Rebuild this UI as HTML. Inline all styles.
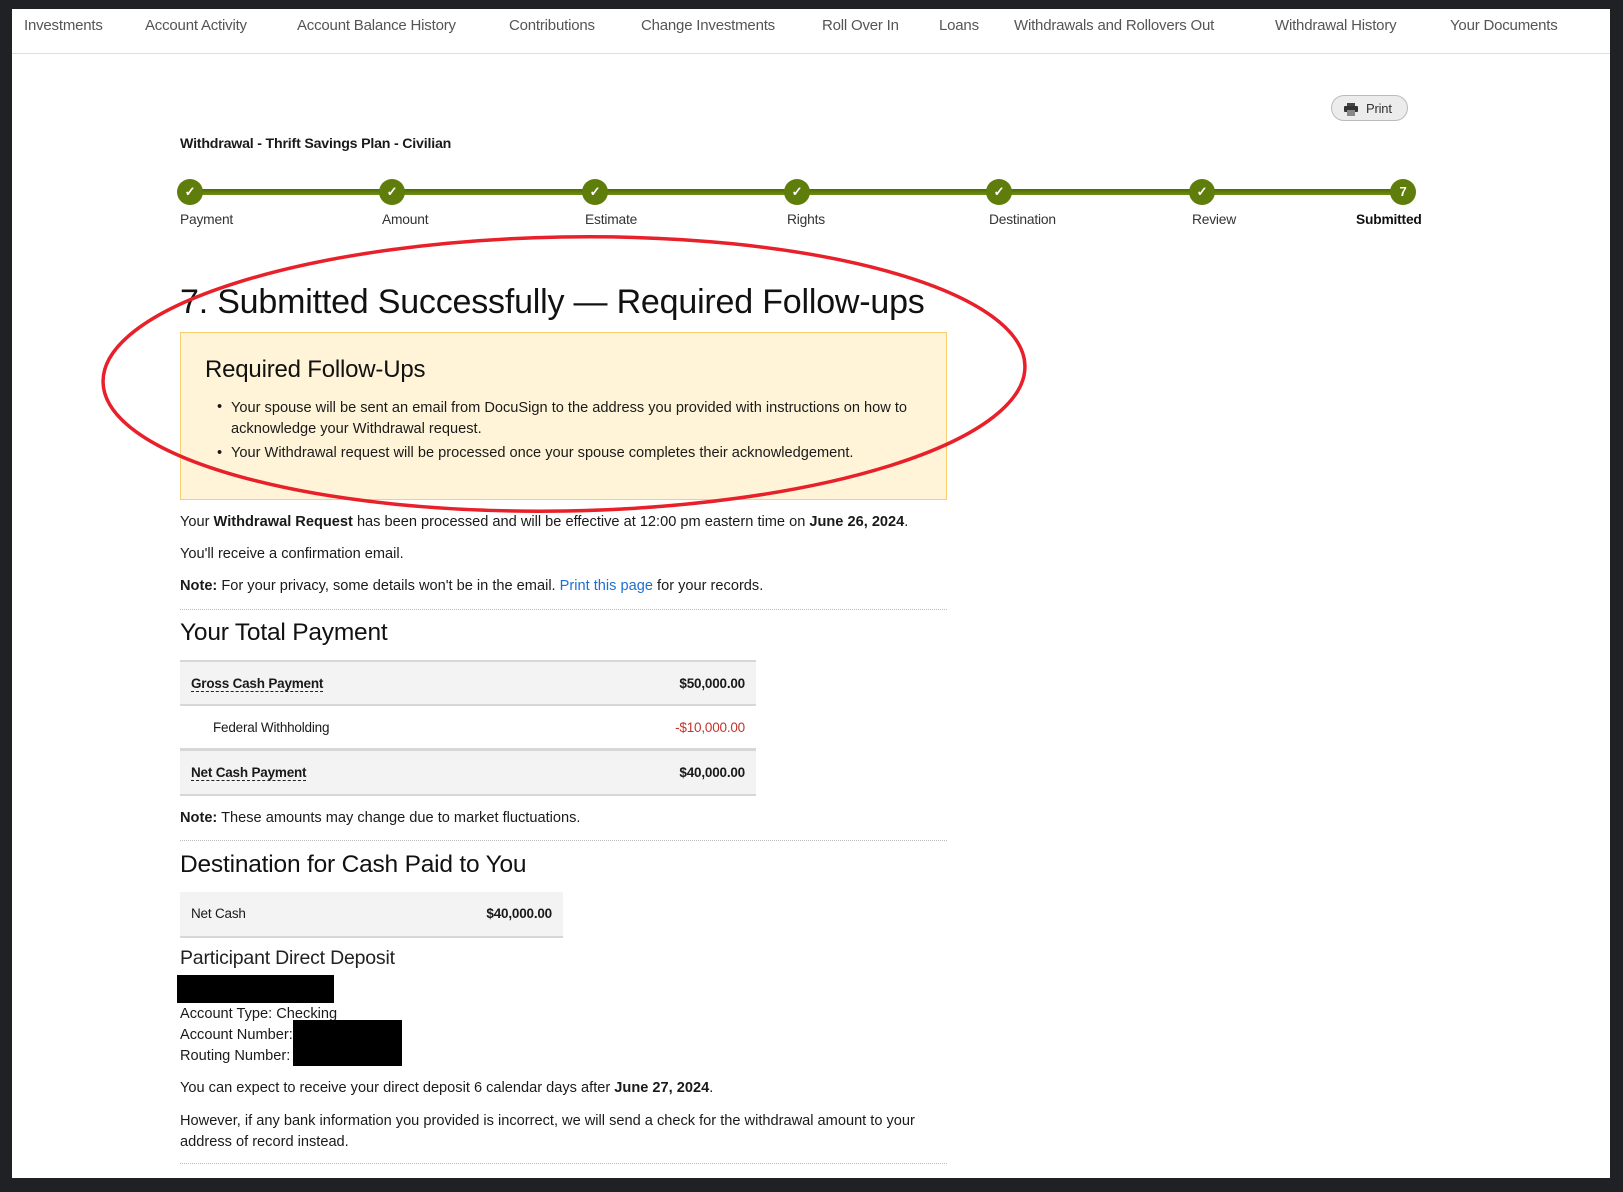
<!DOCTYPE html>
<html><head><meta charset="utf-8"><style>
*{margin:0;padding:0;box-sizing:border-box}
body{width:1623px;height:1192px;background:#202124;position:relative;overflow:hidden;font-family:"Liberation Sans",sans-serif;color:#1a1a1a;letter-spacing:-0.2px}
#page{position:absolute;left:12px;top:9px;width:1598px;height:1169px;background:#fff}
.a{position:absolute;white-space:nowrap}
.nav{top:8px;font-size:15px;color:#555}
.t{font-size:14.6px;letter-spacing:0}
.dot{position:absolute;left:168px;width:767px;border-top:1px dotted #bbb}
.c{position:absolute;width:26px;height:26px;border-radius:50%;background:#5f7d0a;color:#fff;font-size:13px;text-align:center;line-height:26px;font-weight:bold}
.lbl{position:absolute;top:203px;font-size:13.8px;color:#333}
.row{position:absolute;left:168px;width:576px;height:45px;border-bottom:2px solid #d7d7d7;font-size:13.5px}
.row span{position:absolute;top:14px}
.u{border-bottom:1px dashed #222;font-weight:bold}
b{font-weight:bold}
</style></head><body>
<div id="page">
<div class="a nav" style="left:12px">Investments</div>
<div class="a nav" style="left:133px">Account Activity</div>
<div class="a nav" style="left:285px">Account Balance History</div>
<div class="a nav" style="left:497px">Contributions</div>
<div class="a nav" style="left:629px">Change Investments</div>
<div class="a nav" style="left:810px">Roll Over In</div>
<div class="a nav" style="left:927px">Loans</div>
<div class="a nav" style="left:1002px">Withdrawals and Rollovers Out</div>
<div class="a nav" style="left:1263px">Withdrawal History</div>
<div class="a nav" style="left:1438px">Your Documents</div>
<div style="position:absolute;left:0;top:44px;width:1598px;border-top:1px solid #ddd"></div>

<div style="position:absolute;left:1319px;top:86px;width:77px;height:26px;border:1px solid #bbb;border-radius:13px;background:#ececec;font-size:13px;color:#333">
<svg style="position:absolute;left:12px;top:7px" width="14" height="13" viewBox="0 0 14 13"><rect x="3" y="0" width="8" height="3" fill="#444"/><rect x="0" y="3" width="14" height="6" rx="1" fill="#333"/><rect x="3" y="7" width="8" height="6" fill="#888"/></svg>
<span style="position:absolute;left:34px;top:5px">Print</span></div>

<div class="a" style="left:168px;top:127px;font-size:14.2px;font-weight:bold">Withdrawal - Thrift Savings Plan - Civilian</div>

<div style="position:absolute;left:178px;top:180px;width:1214px;height:6px;background:linear-gradient(#4e6a05,#6e8f14)"></div>
<div class="c" style="left:165px;top:170px">✓</div>
<div class="c" style="left:367px;top:170px">✓</div>
<div class="c" style="left:570px;top:170px">✓</div>
<div class="c" style="left:772px;top:170px">✓</div>
<div class="c" style="left:974px;top:170px">✓</div>
<div class="c" style="left:1177px;top:170px">✓</div>
<div class="c" style="left:1378px;top:170px">7</div>
<div class="lbl" style="left:168px">Payment</div>
<div class="lbl" style="left:370px">Amount</div>
<div class="lbl" style="left:573px">Estimate</div>
<div class="lbl" style="left:775px">Rights</div>
<div class="lbl" style="left:977px">Destination</div>
<div class="lbl" style="left:1180px">Review</div>
<div class="lbl" style="left:1344px;font-weight:bold;color:#111">Submitted</div>

<div class="a" style="left:168px;top:274px;font-size:34px;color:#111">7. Submitted Successfully — Required Follow-ups</div>

<div style="position:absolute;left:168px;top:323px;width:767px;height:168px;background:#fff4d8;border:1px solid #f7cf72"></div>
<div class="a" style="left:193px;top:347px;font-size:24px;color:#111">Required Follow-Ups</div>
<div class="a t" style="left:205px;top:390px">•</div>
<div class="a t" style="left:219px;top:389px;line-height:21px">Your spouse will be sent an email from DocuSign to the address you provided with instructions on how to<br>acknowledge your Withdrawal request.</div>
<div class="a t" style="left:205px;top:436px">•</div>
<div class="a t" style="left:219px;top:436px">Your Withdrawal request will be processed once your spouse completes their acknowledgement.</div>

<div class="a t" style="left:168px;top:505px">Your <b>Withdrawal Request</b> has been processed and will be effective at 12:00 pm eastern time on <b>June 26, 2024</b>.</div>
<div class="a t" style="left:168px;top:537px">You'll receive a confirmation email.</div>
<div class="a t" style="left:168px;top:569px"><b>Note:</b> For your privacy, some details won't be in the email. <span style="color:#1f6fd1">Print this page</span> for your records.</div>
<div class="dot" style="top:600px"></div>

<div class="a" style="left:168px;top:610px;font-size:24.5px;color:#111">Your Total Payment</div>
<div class="row" style="top:651px;background:#f3f3f3;border-top:2px solid #d7d7d7;height:46px"><span class="u" style="left:11px">Gross Cash Payment</span><span style="right:11px;font-weight:bold">$50,000.00</span></div>
<div class="row" style="top:697px;border-bottom-width:3px"><span style="left:33px">Federal Withholding</span><span style="right:11px;color:#c8332b">-$10,000.00</span></div>
<div class="row" style="top:742px;background:#f3f3f3"><span class="u" style="left:11px">Net Cash Payment</span><span style="right:11px;font-weight:bold">$40,000.00</span></div>
<div class="a t" style="left:168px;top:801px"><b>Note:</b> These amounts may change due to market fluctuations.</div>
<div class="dot" style="top:831px"></div>

<div class="a" style="left:168px;top:842px;font-size:24.5px;color:#111">Destination for Cash Paid to You</div>
<div class="row" style="top:883px;width:383px;background:#f3f3f3;height:46px"><span style="left:11px">Net Cash</span><span style="right:11px;font-weight:bold">$40,000.00</span></div>
<div class="a" style="left:168px;top:938px;font-size:19.5px;color:#222">Participant Direct Deposit</div>
<div style="position:absolute;left:165px;top:966px;width:157px;height:28px;background:#000"></div>
<div class="a t" style="left:168px;top:995px;line-height:21px">Account Type: Checking<br>Account Number:<br>Routing Number:</div>
<div style="position:absolute;left:281px;top:1011px;width:109px;height:46px;background:#000"></div>
<div class="a t" style="left:168px;top:1071px">You can expect to receive your direct deposit 6 calendar days after <b>June 27, 2024</b>.</div>
<div class="a t" style="left:168px;top:1102px;line-height:21px">However, if any bank information you provided is incorrect, we will send a check for the withdrawal amount to your<br>address of record instead.</div>
<div class="dot" style="top:1154px"></div>
</div>
<svg style="position:absolute;left:0;top:0" width="1623" height="1192"><ellipse cx="564" cy="374" rx="461" ry="137" fill="none" stroke="#e8202a" stroke-width="3.5" transform="rotate(-1 564 374)"/></svg>
</body></html>
